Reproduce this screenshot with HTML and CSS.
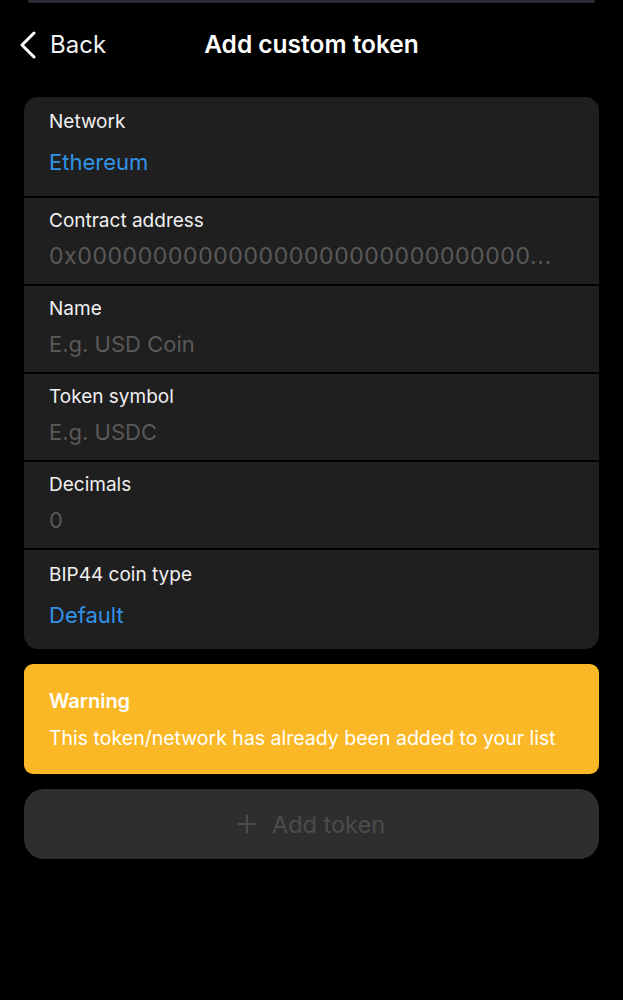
FILE: index.html
```html
<!DOCTYPE html>
<html>
<head>
    <link rel="stylesheet" href="styles.css">
</head>
<body>
    <div class="top-edge"></div>

    <header class="nav">
        <a class="nav-back" href="#">
            <svg class="chevron" width="18" height="28" viewBox="0 0 18 28">
                <path d="M15 2 L3 14 L15 26" fill="none" stroke="#fff" stroke-width="3" stroke-linecap="round" stroke-linejoin="round"/>
            </svg>
            <span>Back</span>
        </a>
        <h1 class="nav-title">Add custom token</h1>
    </header>

    <div class="form-card">
        <div class="field field-select">
            <div class="field-label">Network</div>
            <div class="field-value link">Ethereum</div>
        </div>
        <div class="field">
            <div class="field-label">Contract address</div>
            <div class="field-value placeholder address">0x000000000000000000000000000000...</div>
        </div>
        <div class="field">
            <div class="field-label">Name</div>
            <div class="field-value placeholder">E.g. USD Coin</div>
        </div>
        <div class="field">
            <div class="field-label">Token symbol</div>
            <div class="field-value placeholder">E.g. USDC</div>
        </div>
        <div class="field">
            <div class="field-label">Decimals</div>
            <div class="field-value placeholder">0</div>
        </div>
        <div class="field field-select">
            <div class="field-label">BIP44 coin type</div>
            <div class="field-value link">Default</div>
        </div>
    </div>

    <div class="warning">
        <div class="warning-title">Warning</div>
        <div class="warning-text">This token/network has already been added to your list</div>
    </div>

    <button class="add-button" disabled>
        <svg class="plus" width="18" height="18" viewBox="0 0 18 18">
            <path d="M9 0 V18 M0 9 H18" stroke="#4c4c4c" stroke-width="2"/>
        </svg>
        <span>Add token</span>
    </button>
</body>
</html>
```

FILE: styles.css
```css
body {
    margin: 0;
    background-color: #000;
    font-family: Inter, 'Noto Sans', sans-serif;
    color: #f2f2f2;
}

.top-edge {
    height: 3px;
    margin: 0 28px;
    background: #2a2a32;
    border-radius: 0 0 2px 2px;
}

/* top navigation */
.nav {
    position: relative;
    height: 94px;
    display: flex;
    align-items: center;
    justify-content: center;
    box-sizing: border-box;
    padding-bottom: 13px;
}

.nav-back {
    position: absolute;
    left: 19px;
    top: 27px;
    display: flex;
    align-items: center;
    gap: 13px;
    color: #f2f2f2;
    text-decoration: none;
    font-size: 24px;
}

.nav-title {
    margin: 0;
    font-size: 24.5px;
    font-weight: 600;
    color: #fff;
}

/* form */
.form-card {
    margin: 0 24px;
    background: #1f1f1f;
    border-radius: 14px;
    overflow: hidden;
}

.field {
    padding: 11px 25px 14px;
    border-top: 2px solid #000;
}

.field:first-child {
    border-top: none;
}

.field-label {
    font-size: 19px;
    line-height: 24px;
    color: #f0f0f0;
}

.field-value {
    margin-top: 9px;
    font-size: 22px;
    line-height: 28px;
    white-space: nowrap;
}

.field-value.address {
    font-size: 23px;
    letter-spacing: 0.6px;
}

.field-select {
    padding-top: 13px;
    padding-bottom: 20px;
}

.field-select .field-value {
    margin-top: 14px;
}

.link {
    color: #3193e6;
}

.placeholder {
    color: #595959;
}

/* warning banner */
.warning {
    margin: 15px 24px 0;
    padding: 24px 25px 24px;
    background: #fbb826;
    border-radius: 9px;
    color: #fff;
}

.warning-title {
    font-size: 20px;
    line-height: 26px;
    font-weight: 600;
}

.warning-text {
    margin-top: 12px;
    font-size: 19.5px;
    line-height: 24px;
}

.add-button {
    display: flex;
    align-items: center;
    justify-content: center;
    gap: 16px;
    width: calc(100% - 48px);
    height: 70px;
    margin: 15px 24px 0;
    border: none;
    border-radius: 20px;
    background: #2e2e2e;
    color: #4c4c4c;
    font-family: Inter, 'Noto Sans', sans-serif;
    font-size: 23.5px;
}
```
